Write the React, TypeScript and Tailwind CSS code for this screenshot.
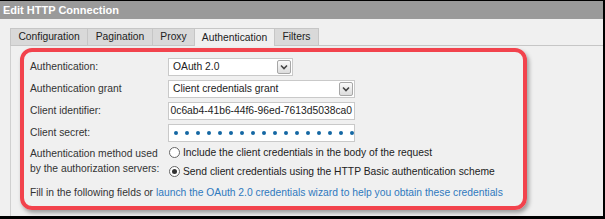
import React from 'react';

const tabs = [
  { label: 'Configuration', w: 'w-[78px]' },
  { label: 'Pagination', w: 'w-[65px]' },
  { label: 'Proxy', w: 'w-[42px]' },
  { label: 'Authentication', w: 'w-[80px]', active: true },
  { label: 'Filters', w: 'w-[44px]' },
];

const DropButton: React.FC = () => (
  <div className="ml-auto mr-[1px] flex h-[14px] w-[14px] items-center justify-center rounded-[2px] border border-[#a7a7a7] bg-gradient-to-b from-[#fbfbfb] to-[#dcdcdc]">
    <svg width="8" height="6" viewBox="0 0 8 6">
      <path d="M1 1.5 L4 4.5 L7 1.5" fill="none" stroke="#444" strokeWidth="1.6" />
    </svg>
  </div>
);

const Select: React.FC<{ value: string; width: string }> = ({ value, width }) => (
  <div className={`flex h-[18px] ${width} items-center border border-[#c9c9c9] bg-white pl-[4px]`}>
    <span className="text-[#222]">{value}</span>
    <DropButton />
  </div>
);

const Row: React.FC<{ label: string; children: React.ReactNode }> = ({ label, children }) => (
  <div className="mb-[4px] flex h-[18px] items-center">
    <div className="w-[138px] text-[#333]">{label}</div>
    {children}
  </div>
);

const Radio: React.FC<{ checked?: boolean; label: string }> = ({ checked, label }) => (
  <div className="flex h-[17px] items-center">
    <div className="flex h-[11px] w-[11px] items-center justify-center rounded-full border border-[#666] bg-white">
      {checked && <div className="h-[5px] w-[5px] rounded-full bg-[#333]" />}
    </div>
    <span className="ml-[3px] text-[#222]">{label}</span>
  </div>
);

const App: React.FC = () => {
  return (
    <div className="h-[219px] w-[605px] overflow-hidden border-t border-r-2 border-b-[3px] border-black bg-[#f0f0f0] font-['Liberation_Sans',Arial,sans-serif] text-[10.3px]">
      {/* title bar */}
      <div className="flex h-[18px] items-center bg-[#9a9a9a] pl-[3px] text-[11px] font-bold text-white">
        Edit HTTP Connection
      </div>

      {/* tabs */}
      <div className="mt-[9px] flex h-[18px] pl-[10px]">
        {tabs.map(t => (
          <div
            key={t.label}
            className={`flex ${t.w} items-center justify-center border-t border-r border-[#c6c6c6] first:border-l ${
              t.active ? 'bg-[#f0f0f0] text-[#222]' : 'border-b bg-[#d9d9d9] text-[#222]'
            }`}
          >
            {t.label}
          </div>
        ))}
        <div className="flex-1 border-b border-[#c6c6c6]" />
      </div>

      {/* panel */}
      <div className="ml-[10px] h-[180px] border-l border-[#d0d0d0] pl-[9px] pt-[2px]">
        <div className="w-[507px] rounded-[12px] border-[4px] border-[#f2434d] pl-[6px] pt-[6px] pb-[6px] shadow-[2px_3px_4px_rgba(0,0,0,0.35)]">
          <Row label="Authentication:">
            <Select value="OAuth 2.0" width="w-[125px]" />
          </Row>
          <Row label="Authentication grant">
            <Select value="Client credentials grant" width="w-[187px]" />
          </Row>
          <Row label="Client identifier:">
            <div className="flex h-[18px] w-[187px] items-center justify-end overflow-hidden whitespace-nowrap border border-[#c9c9c9] bg-white pr-[2px] text-[#222]">
              0c6ab4-41b6-44f6-96ed-7613d5038ca0
            </div>
          </Row>
          <Row label="Client secret:">
            <div className="flex h-[18px] w-[187px] items-center gap-[7px] overflow-hidden border border-[#c9c9c9] bg-white pl-[5px]">
              {Array.from({ length: 17 }).map((_, i) => (
                <div key={i} className="h-[4px] w-[4px] shrink-0 rounded-full bg-[#1467a3]" />
              ))}
            </div>
          </Row>

          <div className="mt-[3px] flex">
            <div className="w-[139px] leading-[15px] text-[#333]">
              Authentication method used
              <br />
              by the authorization servers:
            </div>
            <div className="-mt-[2px] flex flex-col gap-[2px]">
              <Radio label="Include the client credentials in the body of the request" />
              <Radio checked label="Send client credentials using the HTTP Basic authentication scheme" />
            </div>
          </div>

          <div className="mt-[5px] text-[#333]">
            Fill in the following fields or{' '}
            <span className="text-[#2f79be]">
              launch the OAuth 2.0 credentials wizard to help you obtain these credentials
            </span>
          </div>
        </div>
      </div>
    </div>
  );
};

export default App;
